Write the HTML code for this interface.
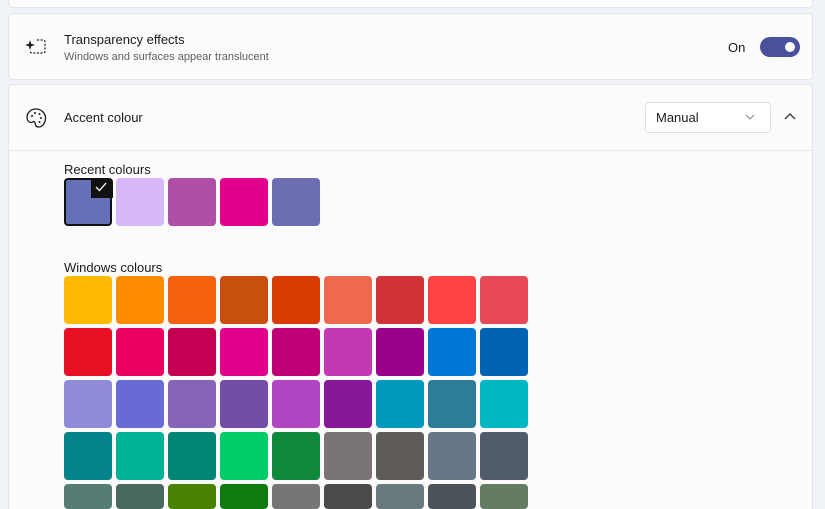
<html style="overflow:hidden;height:509px"><head><style>
body{margin:0;width:825px;height:509px;overflow:hidden;background:#f0f3f8;font-family:"Liberation Sans",sans-serif;position:relative}
.card{position:absolute;left:8px;width:805px;background:#fbfbfc;border:1px solid #e5e5e5;border-radius:4px;box-sizing:border-box}
.t{position:absolute;font-size:13px;color:#1b1b1b}
.s{position:absolute;font-size:11px;color:#606060}
.sw{position:absolute;width:48px;height:48px;border-radius:4px}
</style></head><body>
<div class="card" style="top:-10px;height:18px"></div>
<div class="card" style="top:13px;height:67px">
<svg style="position:absolute;left:15px;top:22px" width="24" height="20" viewBox="0 0 24 20"><path d="M6 4 L7.2 7.8 L11 9 L7.2 10.2 L6 14 L4.8 10.2 L1 9 L4.8 7.8Z" fill="#1b1b1b"/><path d="M13 4h6a2 2 0 0 1 2 2v9a2 2 0 0 1-2 2h-11a2 2 0 0 1-2-2v-1" fill="none" stroke="#1b1b1b" stroke-width="1.2" stroke-dasharray="2 1.6"/></svg>
<div class="t" style="left:55px;top:18px">Transparency effects</div>
<div class="s" style="left:55px;top:37px">Windows and surfaces appear translucent</div>
<div class="t" style="left:719px;top:26px">On</div>
<div style="position:absolute;left:751px;top:23px;width:40px;height:20px;border-radius:10px;background:#4a519c"></div>
<div style="position:absolute;left:776px;top:28px;width:10px;height:10px;border-radius:5px;background:#fff"></div>
</div>
<div class="card" style="top:84px;height:440px">
<svg style="position:absolute;left:16px;top:22px" width="22" height="22" viewBox="0 0 22 22"><path d="M11 2C6 2 2 5.5 2 10.5c0 3 2 5 4 5 1.5 0 2-1 3-1 1.2 0 1 2 1.5 3.5.5 1.5 2 2 3 2 4 0 7-4 7-9S16 2 11 2z" fill="none" stroke="#1b1b1b" stroke-width="1.3"/><circle cx="7" cy="9" r="1" fill="#1b1b1b"/><circle cx="10" cy="6" r="1" fill="#1b1b1b"/><circle cx="14.5" cy="7" r="1" fill="#1b1b1b"/><circle cx="16" cy="11" r="1" fill="#1b1b1b"/><circle cx="14.5" cy="15" r="1" fill="#1b1b1b"/></svg>
<div class="t" style="left:55px;top:25px">Accent colour</div>
<div style="position:absolute;left:636px;top:17px;width:126px;height:31px;border:1px solid #e0e0e0;border-radius:4px;background:#fff;box-sizing:border-box"></div>
<div class="t" style="left:647px;top:25px">Manual</div>
<svg style="position:absolute;left:736px;top:28px" width="10" height="8"><path d="M1 2l4 4 4-4" fill="none" stroke="#888" stroke-width="1"/></svg>
<svg style="position:absolute;left:775px;top:27px" width="12" height="8"><path d="M1 7l5-5 5 5" fill="none" stroke="#333" stroke-width="1.3"/></svg>
<div style="position:absolute;left:0;right:0;top:65px;border-top:1px solid #e8e8e8"></div>
<div class="t" style="left:55px;top:77px">Recent colours</div>
<div class="t" style="left:55px;top:175px">Windows colours</div>
</div>
<div id="g"></div>
<script>
var g=document.getElementById('g'),h='';
var rec=['#6670b8','#d8b8f8','#b04fa8','#e3008c','#6b6eb0'];
rec.forEach(function(c,i){h+='<div class="sw" style="left:'+(64+i*52)+'px;top:178px;background:'+c+(i==0?';box-sizing:border-box;border:2px solid #111':'')+'"></div>';});
h+='<div style="position:absolute;left:91px;top:178px;width:22px;height:20px;background:#111;border-radius:0 4px 0 0"></div><svg style="position:absolute;left:94px;top:181px" width="14" height="12"><path d="M2 6l3.5 3.5L12 2" fill="none" stroke="#fff" stroke-width="1.3"/></svg>';
var rows=[['#FFB900','#FF8C00','#F7630C','#CA5010','#DA3B01','#EF6950','#D13438','#FF4343','#E74856'],
['#E81123','#EA005E','#C30052','#E3008C','#BF0077','#C239B3','#9A0089','#0078D7','#0063B1'],
['#8E8CD8','#6B69D6','#8764B8','#744DA9','#B146C2','#881798','#0099BC','#2D7D9A','#00B7C3'],
['#038387','#00B294','#018574','#00CC6A','#10893E','#7A7574','#5D5A58','#68768A','#515C6B'],
['#567C73','#486860','#498205','#107C10','#767676','#4C4A48','#69797E','#4A5459','#647C64']];
rows.forEach(function(r,j){r.forEach(function(c,i){h+='<div class="sw" style="left:'+(64+i*52)+'px;top:'+(276+j*52)+'px;height:'+(j==4?25:48)+'px;background:'+c+'"></div>';});});
g.innerHTML=h;
</script>
</body></html>
